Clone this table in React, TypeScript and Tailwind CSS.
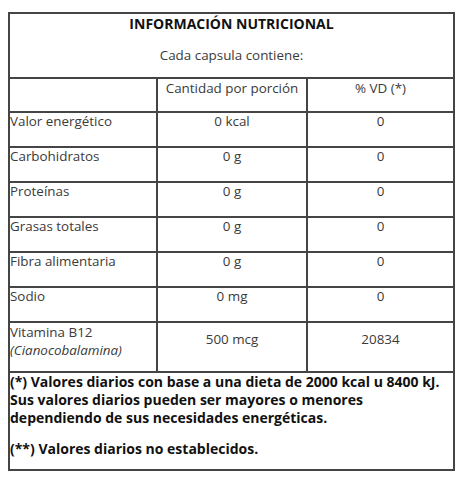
import React from "react";

const rows: [string, string, string][] = [
  ["Valor energético", "0 kcal", "0"],
  ["Carbohidratos", "0 g", "0"],
  ["Proteínas", "0 g", "0"],
  ["Grasas totales", "0 g", "0"],
  ["Fibra alimentaria", "0 g", "0"],
  ["Sodio", "0 mg", "0"],
];

export default function App() {
  return (
    <div className="w-[474px] h-[487px] bg-white pt-[12px] pl-[8px] text-[13.4px] leading-[19px] text-[#3a3a3a]" style={{ fontFamily: '"Open Sans", sans-serif' }}>
      <div className="w-[447px] border-2 border-[#454545]">
        <div className="h-[63px] flex flex-col items-center">
          <div className="font-bold text-[#111] text-[14px]">INFORMACIÓN NUTRICIONAL</div>
          <div className="mt-[13px]">Cada capsula contiene:</div>
        </div>
        <div className="grid grid-cols-[146px_150px_1fr] border-t-2 border-[#454545] h-[34px]">
          <div></div>
          <div className="border-l-2 border-[#454545] text-center">Cantidad por porción</div>
          <div className="border-l-2 border-[#454545] text-center">% VD (*)</div>
        </div>
        {rows.map((r, i) => (
          <div key={i} className="grid grid-cols-[146px_150px_1fr] border-t-2 border-[#454545] h-[35px]">
            <div className="-mt-[1px]">{r[0]}</div>
            <div className="border-l-2 border-[#454545] text-center"><div className="-mt-[1px]">{r[1]}</div></div>
            <div className="border-l-2 border-[#454545] text-center"><div className="-mt-[1px]">{r[2]}</div></div>
          </div>
        ))}
        <div className="grid grid-cols-[146px_150px_1fr] border-t-2 border-[#454545] h-[50px]">
          <div className="leading-[18px]">
            <div>Vitamina B12</div>
            <div className="italic">(Cianocobalamina)</div>
          </div>
          <div className="border-l-2 border-[#454545] text-center pt-[7px]">500 mcg</div>
          <div className="border-l-2 border-[#454545] text-center pt-[7px]">20834</div>
        </div>
        <div className="border-t-2 border-[#454545] h-[98px] font-bold text-[#111] text-[14px] leading-[18px]">
          <div>(*) Valores diarios con base a una dieta de 2000 kcal u 8400 kJ.</div>
          <div>Sus valores diarios pueden ser mayores o menores</div>
          <div>dependiendo de sus necesidades energéticas.</div>
          <div className="mt-[13px]">(**) Valores diarios no establecidos.</div>
        </div>
      </div>
    </div>
  );
}
